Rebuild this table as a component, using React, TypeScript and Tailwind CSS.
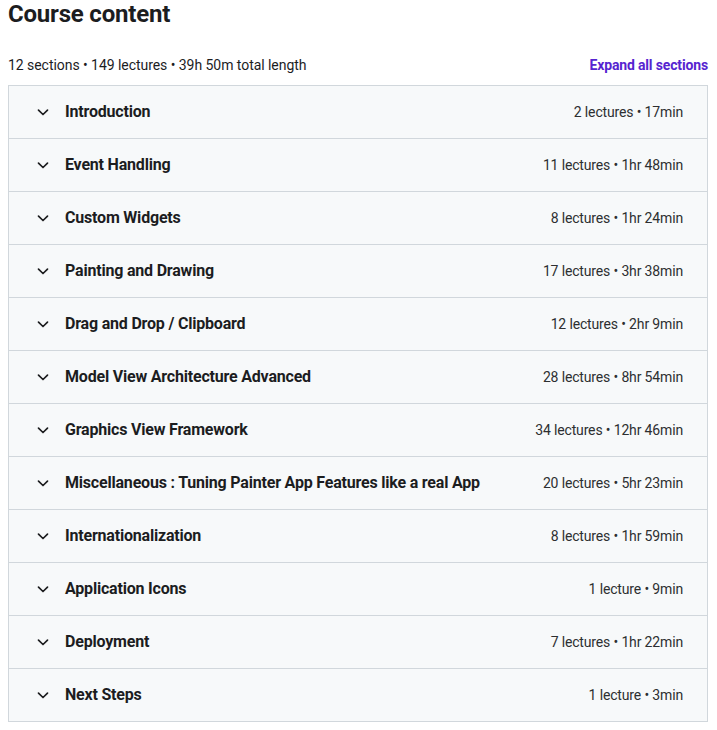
const sections: { title: string; meta: string }[] = [
	{ title: "Introduction", meta: "2 lectures • 17min" },
	{ title: "Event Handling", meta: "11 lectures • 1hr 48min" },
	{ title: "Custom Widgets", meta: "8 lectures • 1hr 24min" },
	{ title: "Painting and Drawing", meta: "17 lectures • 3hr 38min" },
	{ title: "Drag and Drop / Clipboard", meta: "12 lectures • 2hr 9min" },
	{ title: "Model View Architecture Advanced", meta: "28 lectures • 8hr 54min" },
	{ title: "Graphics View Framework", meta: "34 lectures • 12hr 46min" },
	{ title: "Miscellaneous : Tuning Painter App Features like a real App", meta: "20 lectures • 5hr 23min" },
	{ title: "Internationalization", meta: "8 lectures • 1hr 59min" },
	{ title: "Application Icons", meta: "1 lecture • 9min" },
	{ title: "Deployment", meta: "7 lectures • 1hr 22min" },
	{ title: "Next Steps", meta: "1 lecture • 3min" },
];

const Chevron = () => (
	<svg width="16" height="16" viewBox="0 0 16 16" fill="none" className="shrink-0">
		<path d="M3.5 6.2l4.5 4.3 4.5-4.3" stroke="#1c1d1f" strokeWidth="1.7" strokeLinecap="round" strokeLinejoin="round" />
	</svg>
);

const App = () => {
	return (
		<div className="w-[716px] pl-2 pr-[8px] text-[#1c1d1f]" style={{ fontFamily: "Roboto, 'Liberation Sans', sans-serif" }}>
			<h2 className="text-2xl font-bold leading-[1.2] tracking-[-0.2px]">Course content</h2>
			<div className="mt-[26px] mb-[10px] flex items-center justify-between text-sm leading-5">
				<span className="tracking-[-0.05px]">12 sections • 149 lectures • 39h 50m total length</span>
				<button className="font-bold tracking-[-0.15px] text-[#5624d0]">Expand all sections</button>
			</div>
			<div className="w-[700px] border border-[#d1d7dc]">
				{sections.map((s, i) => (
					<div
						key={s.title}
						className={
							"flex items-center bg-[#f7f9fa] pl-[26px] pr-6 " +
							(i < sections.length - 1 ? "h-[53px] border-b border-[#d1d7dc]" : "h-[52px]")
						}
					>
						<Chevron />
						<span className="ml-[14px] flex-1 text-base font-bold tracking-[-0.2px]">{s.title}</span>
						<span className="text-sm tracking-[-0.15px] text-[#2d2f31]">{s.meta}</span>
					</div>
				))}
			</div>
		</div>
	);
};

export default App;
